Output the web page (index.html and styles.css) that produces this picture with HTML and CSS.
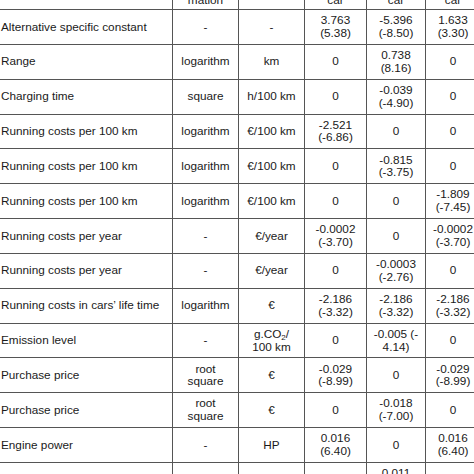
FILE: index.html
```html
<!DOCTYPE html>
<html lang="en">
<head>
<meta charset="utf-8">
<title>Model estimates</title>
<link rel="stylesheet" href="styles.css">
</head>
<body>
<div class="sheet">
  <div class="c head first"></div>
  <div class="c head"><span>Transfor-<br>mation</span></div>
  <div class="c head"><span>Unit<br>&nbsp;<br>&nbsp;</span></div>
  <div class="c head"><span>Electric<br>car</span></div>
  <div class="c head"><span>Hybrid<br>car</span></div>
  <div class="c head"><span>Gasoline<br>car</span></div>

  <div class="c first"><span>Alternative specific constant</span></div>
  <div class="c"><span>-</span></div>
  <div class="c"><span>-</span></div>
  <div class="c"><span>3.763<br>(5.38)</span></div>
  <div class="c"><span>-5.396<br>(-8.50)</span></div>
  <div class="c"><span>1.633<br>(3.30)</span></div>

  <div class="c first"><span>Range</span></div>
  <div class="c"><span>logarithm</span></div>
  <div class="c"><span>km</span></div>
  <div class="c"><span>0</span></div>
  <div class="c"><span>0.738<br>(8.16)</span></div>
  <div class="c"><span>0</span></div>

  <div class="c first"><span>Charging time</span></div>
  <div class="c"><span>square</span></div>
  <div class="c"><span>h/100 km</span></div>
  <div class="c"><span>0</span></div>
  <div class="c"><span>-0.039<br>(-4.90)</span></div>
  <div class="c"><span>0</span></div>

  <div class="c first"><span>Running costs per 100 km</span></div>
  <div class="c"><span>logarithm</span></div>
  <div class="c"><span>€/100 km</span></div>
  <div class="c"><span>-2.521<br>(-6.86)</span></div>
  <div class="c"><span>0</span></div>
  <div class="c"><span>0</span></div>

  <div class="c first"><span>Running costs per 100 km</span></div>
  <div class="c"><span>logarithm</span></div>
  <div class="c"><span>€/100 km</span></div>
  <div class="c"><span>0</span></div>
  <div class="c"><span>-0.815<br>(-3.75)</span></div>
  <div class="c"><span>0</span></div>

  <div class="c first"><span>Running costs per 100 km</span></div>
  <div class="c"><span>logarithm</span></div>
  <div class="c"><span>€/100 km</span></div>
  <div class="c"><span>0</span></div>
  <div class="c"><span>0</span></div>
  <div class="c"><span>-1.809<br>(-7.45)</span></div>

  <div class="c first"><span>Running costs per year</span></div>
  <div class="c"><span>-</span></div>
  <div class="c"><span>€/year</span></div>
  <div class="c"><span>-0.0002<br>(-3.70)</span></div>
  <div class="c"><span>0</span></div>
  <div class="c"><span>-0.0002<br>(-3.70)</span></div>

  <div class="c first"><span>Running costs per year</span></div>
  <div class="c"><span>-</span></div>
  <div class="c"><span>€/year</span></div>
  <div class="c"><span>0</span></div>
  <div class="c"><span>-0.0003<br>(-2.76)</span></div>
  <div class="c"><span>0</span></div>

  <div class="c first"><span>Running costs in cars’ life time</span></div>
  <div class="c"><span>logarithm</span></div>
  <div class="c"><span>€</span></div>
  <div class="c"><span>-2.186<br>(-3.32)</span></div>
  <div class="c"><span>-2.186<br>(-3.32)</span></div>
  <div class="c"><span>-2.186<br>(-3.32)</span></div>

  <div class="c first"><span>Emission level</span></div>
  <div class="c"><span>-</span></div>
  <div class="c"><span>g.CO<sub>2</sub>/<br>100 km</span></div>
  <div class="c"><span>0</span></div>
  <div class="c"><span>-0.005 (-<br>4.14)</span></div>
  <div class="c"><span>0</span></div>

  <div class="c first"><span>Purchase price</span></div>
  <div class="c"><span>root<br>square</span></div>
  <div class="c"><span>€</span></div>
  <div class="c"><span>-0.029<br>(-8.99)</span></div>
  <div class="c"><span>0</span></div>
  <div class="c"><span>-0.029<br>(-8.99)</span></div>

  <div class="c first"><span>Purchase price</span></div>
  <div class="c"><span>root<br>square</span></div>
  <div class="c"><span>€</span></div>
  <div class="c"><span>0</span></div>
  <div class="c"><span>-0.018<br>(-7.00)</span></div>
  <div class="c"><span>0</span></div>

  <div class="c first"><span>Engine power</span></div>
  <div class="c"><span>-</span></div>
  <div class="c"><span>HP</span></div>
  <div class="c"><span>0.016<br>(6.40)</span></div>
  <div class="c"><span>0</span></div>
  <div class="c"><span>0.016<br>(6.40)</span></div>

  <div class="c first"></div>
  <div class="c"></div>
  <div class="c"></div>
  <div class="c"></div>
  <div class="c"><span>0.011<br>&nbsp;</span></div>
  <div class="c"></div>
</div>
</body>
</html>
```

FILE: styles.css
```css
html, body {
  margin: 0;
  padding: 0;
  background: #ffffff;
  overflow: hidden;
  width: 474px;
  height: 474px;
}

.sheet {
  display: grid;
  grid-template-columns: 173px 66px 66px 62px 59px 55px;
  grid-template-rows: 40px repeat(14, 34.85px);
  width: 481px;
  margin-top: -30px;
  font-family: "Liberation Sans", Arial, Helvetica, sans-serif;
  font-size: 11.75px;
  line-height: 12.8px;
  color: #1a1a1a;
}

.c {
  box-sizing: border-box;
  display: flex;
  align-items: center;
  justify-content: center;
  text-align: center;
  border-right: 1px solid #555555;
  border-bottom: 1px solid #555555;
  white-space: nowrap;
  overflow: hidden;
}

.c.first {
  justify-content: flex-start;
  text-align: left;
  padding-left: 1px;
}

.c.head {
  align-items: flex-end;
  padding-bottom: 2.6px;
}

sub {
  font-size: 8px;
  line-height: 0;
  vertical-align: -2px;
}
```
